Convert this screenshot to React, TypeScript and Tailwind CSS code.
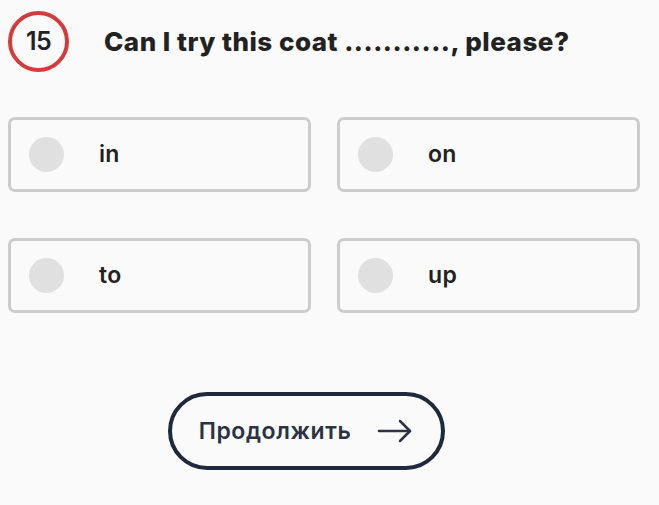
const options = ['in', 'on', 'to', 'up'];

function Option({ label }: { label: string }) {
  return (
    <button className="flex h-[75px] items-center rounded-[7px] border-[3px] border-[#cccccc] bg-[#fafafa] pl-[18px] text-left">
      <span className="h-[35px] w-[35px] shrink-0 rounded-full bg-[#e0e0e0]" />
      <span className="ml-[35px] text-[23px] font-semibold tracking-[0.3px] text-[#222222]">{label}</span>
    </button>
  );
}

export default function App() {
  return (
    <main
      className="min-h-[505px] w-[659px] bg-[#fafafa] text-[#222222]"
      style={{ fontFamily: 'Inter, "Noto Sans", sans-serif' }}
    >
      {/* Question */}
      <div className="flex items-center pl-[8px] pt-[11px]">
        <div className="flex h-[61px] w-[61px] items-center justify-center rounded-full border-[4px] border-[#d23c3c] text-[25px] font-semibold tracking-tight">
          15
        </div>
        <h1 className="ml-[35px] text-[26px] font-extrabold tracking-[0.5px]">
          Can I try this coat ..........., please?
        </h1>
      </div>

      {/* Answers */}
      <div className="mt-[45px] grid grid-cols-2 gap-x-[26px] gap-y-[46px] pl-[8px] pr-[19px]">
        {options.map((o) => (
          <Option key={o} label={o} />
        ))}
      </div>

      {/* Continue */}
      <div className="mt-[79px] flex justify-center pr-[47px]">
        <button className="flex h-[78px] w-[277px] items-center justify-center gap-[26px] rounded-full border-[4px] border-[#1e293b] text-[23px] font-semibold tracking-[0.6px] text-[#2b3242]">
          <span>Продолжить</span>
          <svg width="36" height="24" viewBox="0 0 36 24" fill="none" stroke="#2b3242" strokeWidth="2.5" strokeLinecap="round" strokeLinejoin="round">
            <path d="M2 12h31" />
            <path d="M23 2l10 10-10 10" />
          </svg>
        </button>
      </div>
    </main>
  );
}
